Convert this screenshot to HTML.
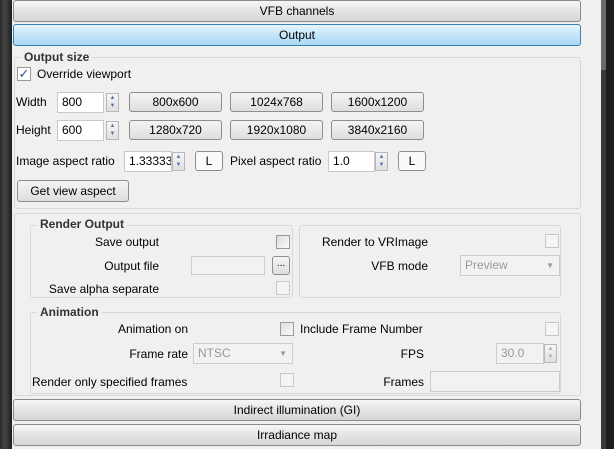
<!DOCTYPE html>
<html><head><style>
*{box-sizing:border-box;margin:0;padding:0}
body{width:614px;height:449px;overflow:hidden;background:#f0f0f0;font-family:"Liberation Sans",sans-serif;font-size:12px;color:#000;position:relative;white-space:nowrap}
.a{position:absolute}
.lft{left:0;top:0;width:12px;height:449px;background:linear-gradient(90deg,#2a2a2a,#444 40%,#333 70%,#1c1c1c)}
.rt1{left:601px;top:0;width:5px;height:449px;background:#6a6a6a}
.rt1b{left:601px;top:70px;width:5px;height:379px;background:#3a3a3a}
.rt2{left:606px;top:0;width:8px;height:449px;background:#1e1e1e}
.hdr{left:13px;width:568px;height:22px;border:1px solid #8a8a8a;border-radius:3px;background:linear-gradient(#f6f6f6,#e4e4e4 50%,#d6d6d6);text-align:center;line-height:20px;font-size:12px}
.blue{background:linear-gradient(#e6f5fd,#c4e5f8 50%,#a9d9f4);border-color:#3c7fb1}
.grp{border:1px solid #d8d8d8;border-radius:3px}
.gt{font-weight:bold;color:#333;background:#f0f0f0;padding:0 3px;font-size:12px}
.btn{height:20px;border:1px solid #8e8e8e;border-radius:3px;background:linear-gradient(#f4f4f4,#dedede);text-align:center;line-height:18px}
.inp{height:21px;background:#fff;border:1px solid #c8c8c8;padding-left:4px;line-height:19px;overflow:hidden}
.spin{width:13px;height:19px;border:1px solid #b8b8b8;background:linear-gradient(#f6f6f6,#e0e0e0);font-size:6px;color:#5577aa;text-align:center;line-height:8px}
.cb{width:14px;height:14px;border:1px solid #9a9a9a;background:linear-gradient(135deg,#ddd,#fafafa)}
.cbd{border-color:#c8c8c8;background:#f4f4f4}
.dis{color:#999;border-color:#ccc;background:#f2f2f2}
.r{text-align:right}
</style></head><body>
<div class="a lft"></div><div class="a rt1"></div><div class="a rt1b"></div><div class="a rt2"></div>
<div class="a hdr" style="top:0">VFB channels</div>
<div class="a hdr blue" style="top:24px">Output</div>

<div class="a grp" style="left:14px;top:57px;width:567px;height:152px"></div>
<div class="a gt" style="left:21px;top:50px">Output size</div>
<div class="a cb" style="left:17px;top:67px;background:#fff;color:#2a4fa0;font-size:13px;line-height:12px;text-align:center">✓</div>
<div class="a" style="left:37px;top:67px">Override viewport</div>

<div class="a" style="left:16px;top:95px">Width</div>
<div class="a inp" style="left:57px;top:92px;width:47px">800</div>
<div class="a spin" style="left:106px;top:93px">▲<br>▼</div>
<div class="a btn" style="left:129px;top:92px;width:93px">800x600</div>
<div class="a btn" style="left:230px;top:92px;width:93px">1024x768</div>
<div class="a btn" style="left:331px;top:92px;width:93px">1600x1200</div>

<div class="a" style="left:16px;top:123px">Height</div>
<div class="a inp" style="left:57px;top:120px;width:47px">600</div>
<div class="a spin" style="left:106px;top:121px">▲<br>▼</div>
<div class="a btn" style="left:129px;top:120px;width:93px">1280x720</div>
<div class="a btn" style="left:230px;top:120px;width:93px">1920x1080</div>
<div class="a btn" style="left:331px;top:120px;width:93px">3840x2160</div>

<div class="a" style="left:16px;top:154px">Image aspect ratio</div>
<div class="a inp" style="left:124px;top:151px;width:48px">1.33333</div>
<div class="a spin" style="left:172px;top:152px">▲<br>▼</div>
<div class="a btn" style="left:195px;top:151px;width:28px;background:#fafafa">L</div>
<div class="a" style="left:230px;top:154px">Pixel aspect ratio</div>
<div class="a inp" style="left:328px;top:151px;width:47px">1.0</div>
<div class="a spin" style="left:375px;top:152px">▲<br>▼</div>
<div class="a btn" style="left:398px;top:151px;width:28px;background:#fafafa">L</div>
<div class="a btn" style="left:17px;top:180px;width:112px;height:22px;line-height:20px">Get view aspect</div>

<div class="a grp" style="left:14px;top:213px;width:567px;height:183px"></div>
<div class="a grp" style="left:30px;top:225px;width:263px;height:73px"></div>
<div class="a gt" style="left:37px;top:217px">Render Output</div>
<div class="a r" style="left:40px;top:235px;width:119px">Save output</div>
<div class="a cb" style="left:276px;top:235px"></div>
<div class="a r" style="left:40px;top:259px;width:119px">Output file</div>
<div class="a inp dis" style="left:191px;top:256px;width:74px;height:19px"></div>
<div class="a btn" style="left:272px;top:256px;width:18px;height:19px;line-height:14px;font-size:10px">...</div>
<div class="a r" style="left:30px;top:282px;width:129px">Save alpha separate</div>
<div class="a cb cbd" style="left:276px;top:281px"></div>

<div class="a grp" style="left:299px;top:225px;width:262px;height:73px"></div>
<div class="a r" style="left:300px;top:235px;width:128px">Render to VRImage</div>
<div class="a cb cbd" style="left:545px;top:234px"></div>
<div class="a r" style="left:300px;top:259px;width:128px">VFB mode</div>
<div class="a inp dis" style="left:460px;top:255px;width:100px">Preview<span style="float:right;margin-right:5px;font-size:8px">▼</span></div>

<div class="a grp" style="left:30px;top:312px;width:531px;height:82px"></div>
<div class="a gt" style="left:37px;top:305px">Animation</div>
<div class="a r" style="left:60px;top:322px;width:128px">Animation on</div>
<div class="a cb" style="left:280px;top:322px"></div>
<div class="a" style="left:300px;top:322px">Include Frame Number</div>
<div class="a cb cbd" style="left:545px;top:322px"></div>
<div class="a r" style="left:60px;top:347px;width:128px">Frame rate</div>
<div class="a inp dis" style="left:193px;top:343px;width:100px">NTSC<span style="float:right;margin-right:5px;font-size:8px">▼</span></div>
<div class="a r" style="left:300px;top:347px;width:124px">FPS</div>
<div class="a inp dis" style="left:496px;top:343px;width:48px">30.0</div>
<div class="a spin" style="left:544px;top:344px;color:#aaa">▲<br>▼</div>
<div class="a" style="left:32px;top:375px">Render only specified frames</div>
<div class="a cb cbd" style="left:280px;top:373px"></div>
<div class="a r" style="left:300px;top:375px;width:124px">Frames</div>
<div class="a inp dis" style="left:430px;top:371px;width:130px"></div>

<div class="a hdr" style="top:399px">Indirect illumination (GI)</div>
<div class="a hdr" style="top:424px">Irradiance map</div>
</body></html>
